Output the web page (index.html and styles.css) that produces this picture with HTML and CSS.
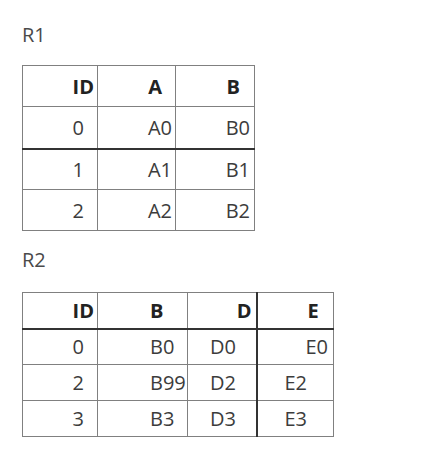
FILE: index.html
```html
<!DOCTYPE html>
<html>
<head>
<meta charset="utf-8">
<link rel="stylesheet" href="styles.css">
</head>
<body>
<div class="page">
  <div class="label">R1</div>
  <table class="grid t1">
    <colgroup><col class="c75"><col class="c78"><col class="c79"></colgroup>
    <tr class="head">
      <th class="r pr3">ID</th><th class="r pr13">A</th><th class="r pr14">B</th>
    </tr>
    <tr class="sep tall">
      <td class="r pr13">0</td><td class="r pr3">A0</td><td class="r pr4">B0</td>
    </tr>
    <tr>
      <td class="r pr13">1</td><td class="r pr3">A1</td><td class="r pr4">B1</td>
    </tr>
    <tr>
      <td class="r pr13">2</td><td class="r pr3">A2</td><td class="r pr4">B2</td>
    </tr>
  </table>
  <div class="label l2">R2</div>
  <table class="grid t2">
    <colgroup><col class="c75"><col class="c90"><col class="c69"><col class="c77"></colgroup>
    <tr class="head sep">
      <th class="r pr3">ID</th><th class="l pl52">B</th><th class="r pr4 vsep">D</th><th class="l pl50">E</th>
    </tr>
    <tr>
      <td class="r pr13">0</td><td class="l pl52">B0</td><td class="l pl22 vsep">D0</td><td class="r pr5">E0</td>
    </tr>
    <tr>
      <td class="r pr13">2</td><td class="l pl52">B99</td><td class="l pl22 vsep">D2</td><td class="l pl27">E2</td>
    </tr>
    <tr>
      <td class="r pr13">3</td><td class="l pl52">B3</td><td class="l pl22 vsep">D3</td><td class="l pl27">E3</td>
    </tr>
  </table>
</div>
</body>
</html>
```
FILE: styles.css
```css
html, body {
  margin: 0;
  padding: 0;
  background: #ffffff;
}
.page {
  padding: 21px 0 0 22px;
  font-family: "Open Sans", "Liberation Sans", sans-serif;
  font-size: 20px;
  color: #3c3c3c;
}
.label {
  line-height: 27px;
  color: #4a4a4a;
  margin-bottom: 17px;
}
.l2 {
  margin-top: 15px;
  margin-bottom: 19px;
}
.grid {
  border-collapse: collapse;
  table-layout: fixed;
}
.t1 { width: 232px; }
.t2 { width: 312px; }
.grid th, .grid td {
  border: 1px solid #808080;
  padding: 0;
  line-height: 27px;
  white-space: nowrap;
}
.grid th {
  font-weight: 700;
  color: #222222;
}
.t1 tr { height: 41px; }
.t1 tr.tall { height: 42px; }
.t2 tr { height: 36px; }
.grid tr.sep th, .grid tr.sep td {
  border-bottom: 2px solid #333333;
}
.grid .vsep {
  border-right: 2px solid #333333;
}
.c75 { width: 75px; }
.c78 { width: 78px; }
.c79 { width: 79px; }
.c90 { width: 90px; }
.c69 { width: 69px; }
.c77 { width: 77px; }
.r { text-align: right; }
.l { text-align: left; }
.pr3 { padding-right: 3px !important; }
.pr4 { padding-right: 4px !important; }
.pr5 { padding-right: 5px !important; }
.pr13 { padding-right: 13px !important; }
.pr14 { padding-right: 14px !important; }
.pl22 { padding-left: 22px !important; }
.pl27 { padding-left: 27px !important; }
.pl50 { padding-left: 50px !important; }
.pl52 { padding-left: 52px !important; }
```
